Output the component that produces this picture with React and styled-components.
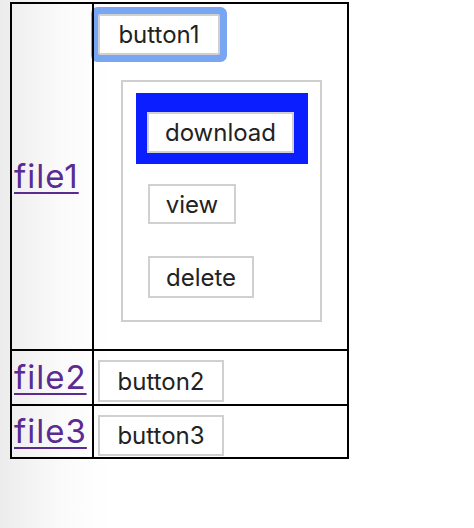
import React from 'react';
import styled, { createGlobalStyle } from 'styled-components';

const GlobalStyle = createGlobalStyle`
  html, body {
    margin: 0;
    padding: 0;
  }

  body {
    min-height: 528px;
    background: linear-gradient(to right, #ececec 0, #fafafa 60px, #fff 110px);
    font-family: Inter, "Open Sans", sans-serif;
  }
`;

const Page = styled.div`
  padding: 2px 0 0 10px;
`;

const FileTable = styled.table`
  border-collapse: collapse;
  border: 2px solid #000;

  td {
    border: 2px solid #000;
    padding: 0;
  }
`;

const NameCell = styled.td`
  width: 78px;
  padding: 0 0 0 2px !important;
  vertical-align: middle;
`;

const ActionCell = styled.td`
  width: 249px;
  vertical-align: top;
  padding: ${({ top }) => top}px 0 ${({ bottom }) => bottom}px 4px !important;
`;

const FileLink = styled.a`
  font-size: 33px;
  letter-spacing: 1px;
  color: #5b2a93;
  text-decoration: underline;
  text-decoration-thickness: 2px;
  text-underline-offset: 4px;
  line-height: 1;
`;

const Button = styled.button`
  display: block;
  width: ${({ w }) => w}px;
  height: ${({ h }) => h || 41}px;
  padding: 0;
  margin: 0;
  text-align: center;
  font-family: Inter, "Open Sans", sans-serif;
  font-size: 24px;
  color: #222;
  background: #fff;
  border: 2px solid #d0d0d0;
  border-radius: ${({ focused }) => (focused ? '2px' : '0')};
  box-shadow: ${({ focused }) => (focused ? '0 0 0 7px #78a6f2' : 'none')};
  cursor: pointer;
`;

const ActionsBox = styled.div`
  width: 184px;
  margin: 25px 0 0 23px;
  padding: 11px 0 22px 13px;
  border: 2px solid #cfcfcf;
  box-sizing: content-box;
  display: flex;
  flex-direction: column;
  align-items: flex-start;
`;

const Highlight = styled.div`
  background: #0a1eff;
  padding: 19px 14px 11px 11px;
  margin-bottom: 20px;
`;

const Indented = styled.div`
  margin-left: 12px;
  margin-top: ${({ gap }) => gap || 0}px;
`;

const App = () => {
  return (
    <>
      <GlobalStyle />
      <Page>
        <FileTable>
          <tbody>
            <tr>
              <NameCell style={{ height: 344 }}>
                <FileLink href="#file1">file1</FileLink>
              </NameCell>
              <ActionCell top={10} bottom={27}>
                <Button focused w={122}>button1</Button>
                <ActionsBox>
                  <Highlight>
                    <Button w={147}>download</Button>
                  </Highlight>
                  <Indented>
                    <Button w={88} h={40}>view</Button>
                  </Indented>
                  <Indented gap={32}>
                    <Button w={106} h={42}>delete</Button>
                  </Indented>
                </ActionsBox>
              </ActionCell>
            </tr>
            <tr>
              <NameCell>
                <FileLink href="#file2">file2</FileLink>
              </NameCell>
              <ActionCell top={9} bottom={2}>
                <Button w={126} h={42}>button2</Button>
              </ActionCell>
            </tr>
            <tr>
              <NameCell>
                <FileLink href="#file3">file3</FileLink>
              </NameCell>
              <ActionCell top={9} bottom={1}>
                <Button w={126}>button3</Button>
              </ActionCell>
            </tr>
          </tbody>
        </FileTable>
      </Page>
    </>
  );
};

export default App;
